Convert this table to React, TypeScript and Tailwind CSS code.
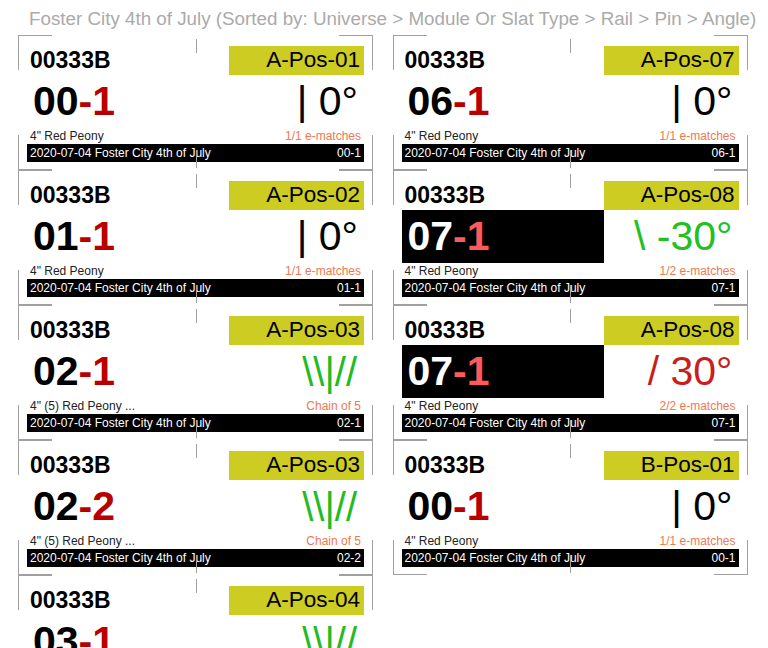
type Shell = {
  id: string;
  pos: string;
  num: string;
  sub: string;
  inverted?: boolean;
  angle: "zero" | "neg30" | "pos30" | "chain";
  name: string;
  note: string;
};

const left: Shell[] = [
  { id: "00333B", pos: "A-Pos-01", num: "00", sub: "1", angle: "zero", name: '4" Red Peony', note: "1/1 e-matches" },
  { id: "00333B", pos: "A-Pos-02", num: "01", sub: "1", angle: "zero", name: '4" Red Peony', note: "1/1 e-matches" },
  { id: "00333B", pos: "A-Pos-03", num: "02", sub: "1", angle: "chain", name: '4" (5) Red Peony ...', note: "Chain of 5" },
  { id: "00333B", pos: "A-Pos-03", num: "02", sub: "2", angle: "chain", name: '4" (5) Red Peony ...', note: "Chain of 5" },
  { id: "00333B", pos: "A-Pos-04", num: "03", sub: "1", angle: "chain", name: '4" (5) Red Peony ...', note: "Chain of 5" },
];

const right: Shell[] = [
  { id: "00333B", pos: "A-Pos-07", num: "06", sub: "1", angle: "zero", name: '4" Red Peony', note: "1/1 e-matches" },
  { id: "00333B", pos: "A-Pos-08", num: "07", sub: "1", inverted: true, angle: "neg30", name: '4" Red Peony', note: "1/2 e-matches" },
  { id: "00333B", pos: "A-Pos-08", num: "07", sub: "1", inverted: true, angle: "pos30", name: '4" Red Peony', note: "2/2 e-matches" },
  { id: "00333B", pos: "B-Pos-01", num: "00", sub: "1", angle: "zero", name: '4" Red Peony', note: "1/1 e-matches" },
];

const Angle = ({ kind }: { kind: Shell["angle"] }) => {
  if (kind === "chain") return <span className="pr-[7px] text-[40px] leading-none text-[#22bb22]">{"\\\\|//"}</span>;
  if (kind === "neg30") return <span className="pr-[6px] text-[41px] leading-none text-[#22c022]">{"\\ -30°"}</span>;
  if (kind === "pos30") return <span className="pr-[6px] text-[41px] leading-none text-[#c81e1e]">/ 30°</span>;
  return <span className="pr-[6px] text-[41px] leading-none text-black">| 0°</span>;
};

const Mark = ({ className }: { className: string }) => (
  <div className={"absolute z-10 bg-[#a0a0a0] " + className} />
);

const Card = ({ s }: { s: Shell }) => (
  <div className="relative h-[135px] shrink-0 px-[9px] pt-[11px]">
    {/* cut marks */}
    <Mark className="left-0 top-0 h-px w-[34px]" />
    <Mark className="left-0 top-0 h-[35px] w-px" />
    <Mark className="right-0 top-0 h-px w-[34px]" />
    <Mark className="right-0 top-0 h-[35px] w-px" />
    <Mark className="bottom-0 left-0 h-px w-[34px]" />
    <Mark className="bottom-0 left-0 h-[35px] w-px" />
    <Mark className="bottom-0 right-0 h-px w-[34px]" />
    <Mark className="bottom-0 right-0 h-[35px] w-px" />
    <Mark className="left-1/2 top-[4px] h-[14px] w-px" />
    <Mark className="bottom-[2px] left-1/2 h-[18px] w-px" />

    <div className="flex h-[29px] items-center justify-between">
      <span className="pl-[3px] text-[23px] font-bold leading-none text-black">{s.id}</span>
      <div className="flex h-full w-[135px] items-center justify-end bg-[#cccc22] pr-[4px] text-[22.5px] leading-none text-black">
        {s.pos}
      </div>
    </div>

    <div className="flex h-[53px]">
      <div className={"flex h-full w-[202px] items-center pl-[6px] " + (s.inverted ? "bg-black" : "")}>
        <span className={"text-[41px] font-bold leading-none " + (s.inverted ? "text-white" : "text-black")}>
          {s.num}
          <span className={s.inverted ? "text-[#ff5a5a]" : "text-[#b80000]"}>-{s.sub}</span>
        </span>
      </div>
      <div className="flex flex-1 items-center justify-end">
        <Angle kind={s.angle} />
      </div>
    </div>

    <div className="flex h-[16px] items-center justify-between px-[3px] text-[12px] leading-none">
      <span className="text-[#222]">{s.name}</span>
      <span className="text-[#f0784f]">{s.note}</span>
    </div>

    <div className="flex h-[18px] items-center justify-between bg-black px-[3px] text-[12px] leading-none text-white">
      <span>2020-07-04 Foster City 4th of July</span>
      <span>
        {s.num}-{s.sub}
      </span>
    </div>
  </div>
);

export default function App() {
  return (
    <div className="h-[648px] w-[768px] overflow-hidden bg-white font-['Liberation_Sans',Arial,sans-serif]">
      <div className="h-[35px] whitespace-nowrap pl-[29px] pt-[9px] text-[18.8px] leading-[20px] text-[#aaaaaa]">
        Foster City 4th of July (Sorted by: Universe &gt; Module Or Slat Type &gt; Rail &gt; Pin &gt; Angle)
      </div>
      <div className="flex gap-[19.5px] pl-[18px]">
        <div className="flex w-[355px] flex-col">
          {left.map((s, i) => (
            <Card key={"l" + i} s={s} />
          ))}
        </div>
        <div className="flex w-[355px] flex-col">
          {right.map((s, i) => (
            <Card key={"r" + i} s={s} />
          ))}
        </div>
      </div>
    </div>
  );
}
